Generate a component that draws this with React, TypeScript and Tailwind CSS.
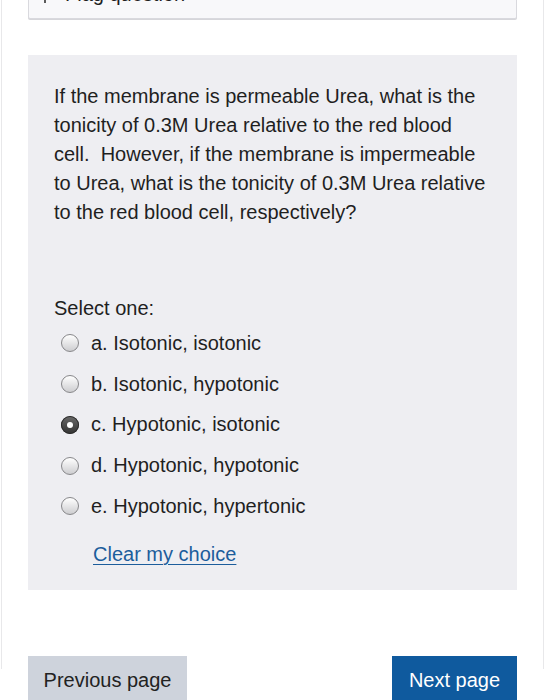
import { useState } from "react";

const options = [
  "a. Isotonic, isotonic",
  "b. Isotonic, hypotonic",
  "c. Hypotonic, isotonic",
  "d. Hypotonic, hypotonic",
  "e. Hypotonic, hypertonic",
];

function Radio({ checked }: { checked: boolean }) {
  if (checked) {
    return (
      <span className="flex h-[18px] w-[18px] shrink-0 items-center justify-center rounded-full bg-gradient-to-b from-[#6a6a6a] to-[#333] shadow-[inset_0_0_0_1px_#2a2a2a]">
        <span className="h-[6px] w-[6px] rounded-full bg-white" />
      </span>
    );
  }
  return (
    <span className="h-[18px] w-[18px] shrink-0 rounded-full border border-[#87878a] bg-gradient-to-b from-white to-[#cdcdd0]" />
  );
}

export default function App() {
  const [selected, setSelected] = useState<number | null>(2);

  return (
    <div className="h-[700px] w-[545px] overflow-hidden bg-white font-['Liberation_Sans',Arial,sans-serif] text-[#1f1f1f]">
      <div className="mx-[1px] h-full border-x border-[#e8e8ea] pl-[26px] pr-[26px]">
        <div className="-mt-[31px] flex h-[50px] items-center gap-[10px] rounded-[2px] border border-[#d9d9de] bg-[#f8f8fa] pl-[14px] text-[20px] shadow-[0_1px_0_#d6d6da]">
          <svg width="12" height="20" viewBox="0 0 12 20" className="text-[#333]">
            <path d="M2 2v17" stroke="currentColor" strokeWidth="1.6" fill="none" />
          </svg>
          <span>Flag question</span>
        </div>

        <div className="mt-[36px] h-[535px] bg-[#eeeef2] pl-[26px] pr-[28px] pt-[27px] text-[20px] leading-[29px]">
          <p>
            If the membrane is permeable Urea, what is the tonicity of 0.3M Urea relative to the red blood cell.&nbsp; However, if the membrane is impermeable to Urea, what is the tonicity of 0.3M Urea relative to the red blood cell, respectively?
          </p>

          <p className="mt-[67px]">Select one:</p>
          <div className="flex flex-col">
            {options.map((o, i) => (
              <button
                key={o}
                onClick={() => setSelected(i)}
                className="flex h-[40.75px] items-center gap-[12px] pl-[7px] text-left"
              >
                <Radio checked={selected === i} />
                <span>{o}</span>
              </button>
            ))}
          </div>
          <button
            onClick={() => setSelected(null)}
            className="mt-[13px] pl-[39px] text-[#1c5d9c] underline decoration-1 underline-offset-[3px]"
          >
            Clear my choice
          </button>
        </div>

        <div className="mt-[66px] flex justify-between text-[20px]">
          <button className="h-[50px] w-[159px] bg-[#ced3dc] pb-[2px] text-[#222]">Previous page</button>
          <button className="h-[50px] w-[125px] bg-[#0f5a9e] pb-[2px] text-white">Next page</button>
        </div>
      </div>
    </div>
  );
}
